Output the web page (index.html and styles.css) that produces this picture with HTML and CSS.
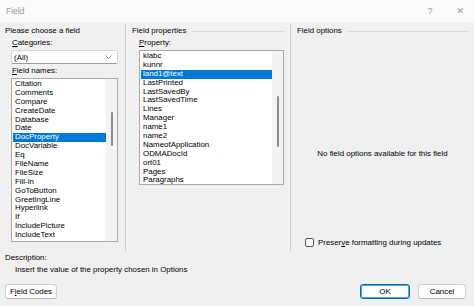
FILE: index.html
```html
<!DOCTYPE html>
<html lang="en">
<head>
    <meta charset="UTF-8">
    <title>Field</title>
    <link rel="stylesheet" href="styles.css">
</head>
<body>

<div class="dialog">
    <div class="titlebar">
        <span class="title">Field</span>
        <span class="help">?</span>
        <span class="close">&#x2715;</span>
    </div>

    <div class="columns">
        <div class="col col-left">
            <div class="group-title plain">Please choose a field</div>
            <div class="label"><u>C</u>ategories:</div>
            <div class="select">
                <span>(All)</span>
                <svg class="chevron" width="7" height="4" viewBox="0 0 7 4"><path d="M0.5 0.5 L3.5 3.5 L6.5 0.5" fill="none" stroke="#777" stroke-width="0.8"/></svg>
            </div>
            <div class="label"><u>F</u>ield names:</div>
            <div class="listbox list-names">
                <ul class="items">
                    <li>Citation</li>
                    <li>Comments</li>
                    <li>Compare</li>
                    <li>CreateDate</li>
                    <li>Database</li>
                    <li>Date</li>
                    <li class="selected">DocProperty</li>
                    <li>DocVariable</li>
                    <li>Eq</li>
                    <li>FileName</li>
                    <li>FileSize</li>
                    <li>Fill-in</li>
                    <li>GoToButton</li>
                    <li>GreetingLine</li>
                    <li>Hyperlink</li>
                    <li>If</li>
                    <li>IncludePicture</li>
                    <li>IncludeText</li>
                </ul>
                <div class="track track-names"><div class="thumb"></div></div>
            </div>
        </div>

        <div class="col col-mid">
            <div class="group-title">Field properties</div>
            <div class="label"><u>P</u>roperty:</div>
            <div class="listbox list-props">
                <ul class="items">
                    <li>klabc</li>
                    <li>kunnr</li>
                    <li class="selected">land1@text</li>
                    <li>LastPrinted</li>
                    <li>LastSavedBy</li>
                    <li>LastSavedTime</li>
                    <li>Lines</li>
                    <li>Manager</li>
                    <li>name1</li>
                    <li>name2</li>
                    <li>NameofApplication</li>
                    <li>ODMADocId</li>
                    <li>ort01</li>
                    <li>Pages</li>
                    <li>Paragraphs</li>
                </ul>
                <div class="track track-props"><div class="thumb"></div></div>
            </div>
        </div>

        <div class="col col-right">
            <div class="group-title">Field options</div>
            <div class="no-options">No field options available for this field</div>
            <label class="check-row">
                <span class="checkbox"></span>
                <span>Preser<u>v</u>e formatting during updates</span>
            </label>
        </div>
    </div>

    <div class="description">
        <div class="desc-label">Description:</div>
        <div class="desc-text">Insert the value of the property chosen in Options</div>
    </div>

    <div class="buttons">
        <button class="btn btn-codes">F<u>i</u>eld Codes</button>
        <div class="spacer"></div>
        <button class="btn btn-ok">OK</button>
        <button class="btn btn-cancel">Cancel</button>
    </div>
</div>

</body>
</html>
```

FILE: styles.css
```css
body {
    margin: 0;
    font-family: "Liberation Sans", Arial, sans-serif;
    font-size: 7.9px;
    color: #000;
    background: #f0f0f0;
}
u {
    text-decoration-thickness: 1px;
    text-underline-offset: 1px;
}
.dialog {
    width: 474px;
    height: 306px;
    overflow: hidden;
}
.titlebar {
    height: 22px;
    display: flex;
    align-items: center;
    padding: 0 10px 0 6px;
    background: #fbfbfb;
    color: #9a9a9a;
    font-size: 8.5px;
}
.title {
    flex: 1;
}
.help {
    margin-right: 24px;
}
.close {
    font-family: "DejaVu Sans", sans-serif;
    font-size: 9px;
}
.columns {
    display: flex;
    height: 228px;
    margin-top: 2px;
}
.col {
    display: flex;
    flex-direction: column;
    box-sizing: border-box;
}
.col-left {
    width: 125px;
}
.col-mid {
    width: 165px;
    border-left: 1px solid #cfcfcf;
}
.col-right {
    flex: 1;
    border-left: 1px solid #cfcfcf;
}
.group-title {
    display: flex;
    align-items: center;
    height: 12px;
    line-height: 12px;
    margin-top: 1px;
    padding-left: 6px;
    white-space: nowrap;
}
.col-left .group-title {
    padding-left: 5px;
}
.group-title::after {
    content: '';
    flex: 1;
    height: 1px;
    background: #d8d8d8;
    margin: 0 5px 0 5px;
}
.group-title.plain::after {
    display: none;
}
.label {
    height: 12px;
    line-height: 12px;
    padding-left: 12px;
}
.col-mid .label {
    padding-left: 13px;
}
.select {
    display: flex;
    align-items: center;
    justify-content: space-between;
    box-sizing: border-box;
    width: 107px;
    height: 14px;
    margin: 1px 0 1px 11px;
    padding: 0 5px 0 2px;
    background: #fff;
    border: 1px solid #d4d4d4;
    border-bottom-color: #9c9c9c;
    border-radius: 2px;
}
.listbox {
    display: flex;
    box-sizing: border-box;
    background: #fff;
    border: 1px solid #a8a8a8;
    overflow: hidden;
}
.list-names {
    width: 107px;
    height: 164px;
    margin: 1px 0 0 11px;
}
.list-props {
    width: 145px;
    height: 135px;
    margin: 1px 0 0 13px;
}
.items {
    list-style: none;
    margin: 0;
    padding: 1px 0 0 1px;
    flex: 1;
}
.items li {
    height: 8.9px;
    line-height: 8.9px;
    padding-left: 2px;
    white-space: nowrap;
}
.items li.selected {
    background: #0078d7;
    color: #fff;
}
.track {
    width: 11px;
    background: #f4f4f4;
    display: flex;
    justify-content: center;
}
.thumb {
    width: 2px;
    background: #8c8c8c;
    border-radius: 1px;
}
.track-names .thumb {
    margin-top: 33px;
    height: 34px;
}
.track-props .thumb {
    margin-top: 45px;
    height: 51px;
}
.no-options {
    margin-top: 111px;
    height: 12px;
    line-height: 12px;
    text-align: center;
}
.check-row {
    display: flex;
    align-items: center;
    height: 12px;
    margin-top: 76px;
    padding-left: 14px;
}
.checkbox {
    box-sizing: border-box;
    width: 9px;
    height: 9px;
    border: 1px solid #555;
    border-radius: 2px;
    background: #fdfdfd;
    margin-right: 4px;
}
.description {
    padding-left: 5px;
}
.desc-label, .desc-text {
    height: 12px;
    line-height: 12px;
}
.desc-text {
    padding-left: 10px;
}
.buttons {
    display: flex;
    align-items: center;
    margin-top: 8px;
    padding: 0 8px 0 5px;
    gap: 8px;
}
.spacer {
    flex: 1;
}
.btn {
    box-sizing: border-box;
    height: 15px;
    padding: 0;
    font-family: inherit;
    font-size: 7.9px;
    color: #000;
    background: #fdfdfd;
    border: 1px solid #d0d0d0;
    border-bottom-color: #b8b8b8;
    border-radius: 3px;
}
.btn-codes {
    width: 52px;
}
.btn-ok {
    width: 50px;
    border: 1px solid #0067c0;
    box-shadow: inset 0 0 0 1px #5fa4df;
}
.btn-cancel {
    width: 48px;
}
```
